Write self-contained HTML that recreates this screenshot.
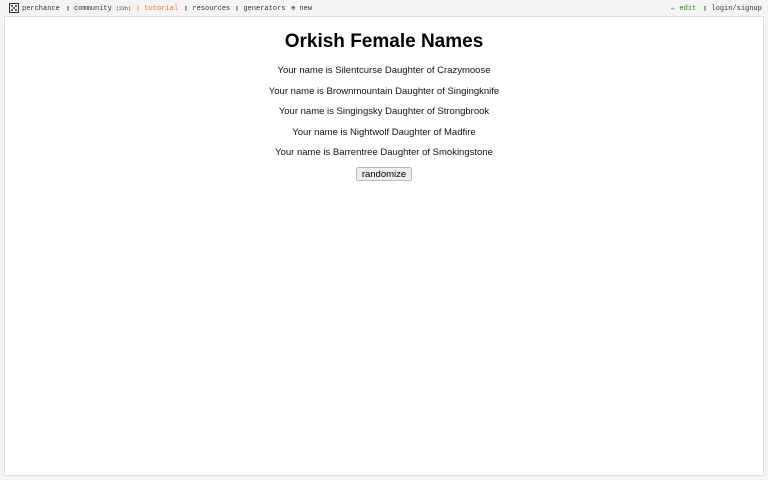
<!DOCTYPE html>
<html><head><style>
body{margin:0;background:#f4f4f4;width:768px;height:480px;overflow:hidden;font-family:"Liberation Sans",sans-serif;}
.nav{position:absolute;top:0;left:0;width:768px;height:16px;font-family:"Liberation Mono",monospace;font-size:7px;color:#333;line-height:18px;}
.nav span{position:absolute;top:0;white-space:nowrap}
.frame{position:absolute;left:4px;top:16px;width:758px;height:458px;background:#fff;border:1px solid #ddd;}
h1{position:absolute;top:14px;left:0;width:758px;text-align:center;margin:0;font-size:19px;line-height:22px;font-weight:bold;color:#000;}
.l{position:absolute;left:0;width:758px;text-align:center;font-size:9.5px;line-height:12px;color:#111;}
button{position:absolute;left:351px;top:150px;width:56px;height:14px;font-family:"Liberation Sans",sans-serif;font-size:9.5px;padding:0;background:#eee;border:1px solid #bbb;border-radius:2px;color:#000;}
.dice{position:absolute;left:9px;top:3px;width:8px;height:8px;border:1px solid #333;}
.dice svg{display:block}
</style></head><body>
<div class="nav">
<div class="dice"><svg width="8" height="8" viewBox="0 0 8 8"><circle cx="2" cy="2" r="1" fill="#333"/><circle cx="6" cy="2" r="1" fill="#333"/><circle cx="4" cy="4" r="1" fill="#333"/><circle cx="2" cy="6" r="1" fill="#333"/><circle cx="6" cy="6" r="1" fill="#333"/></svg></div>
<span style="left:22px">perchance</span>
<span style="left:66px">▯</span>
<span style="left:74px">community <small style="font-size:5px">(22h)</small></span>
<span style="left:136px;color:#e07a2f">▯ tutorial</span>
<span style="left:184px">▯ resources</span>
<span style="left:235px">▯ generators</span>
<span style="left:291px">⊕ new</span>
<span style="left:671px;color:#2a8a2a">✏ edit</span>
<span style="left:703px">▯ login/signup</span>
</div>
<div class="frame">
<h1>Orkish Female Names</h1>
<div class="l" style="top:48px">Your name is Silentcurse Daughter of Crazymoose</div>
<div class="l" style="top:69px">Your name is Brownmountain Daughter of Singingknife</div>
<div class="l" style="top:89px">Your name is Singingsky Daughter of Strongbrook</div>
<div class="l" style="top:110px">Your name is Nightwolf Daughter of Madfire</div>
<div class="l" style="top:130px">Your name is Barrentree Daughter of Smokingstone</div>
<button>randomize</button>
</div>
</body></html>
